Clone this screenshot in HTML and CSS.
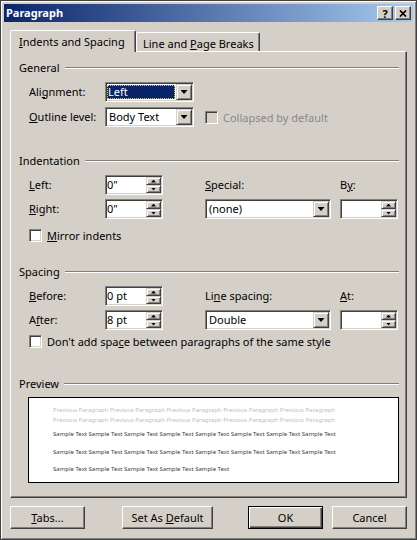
FILE: index.html
```html
<!DOCTYPE html>
<html lang="en">
<head>
    <meta charset="UTF-8">
    <meta name="viewport" content="width=device-width, initial-scale=1.0">
    <title>Paragraph</title>
    <link rel="stylesheet" href="styles.css">
</head>
<body>
    <div class="window">
        <div class="titlebar">
            <span class="title">Paragraph</span>
            <div class="caption-buttons">
                <span class="cap-btn">?</span>
                <span class="cap-btn">
                    <svg width="8" height="7" viewBox="0 0 8 7"><path d="M1 0.5 7 6.5M7 0.5 1 6.5" stroke="#000" stroke-width="1.7"/></svg>
                </span>
            </div>
        </div>

        <div class="client">
            <div class="tabs">
                <div class="tab active"><span><u>I</u>ndents and Spacing</span></div>
                <div class="tab"><span>Line and <u>P</u>age Breaks</span></div>
            </div>

            <div class="panel">
                <!-- General -->
                <div class="group general">
                    <div class="group-title">General</div>
                    <div class="fields">
                        <span class="label">Ali<u>g</u>nment:</span>
                        <div class="combo short">
                            <span class="combo-text selected">Left</span>
                            <span class="combo-btn"><i class="arrow-down"></i></span>
                        </div>
                        <span></span><span></span>

                        <span class="label"><u>O</u>utline level:</span>
                        <div class="combo short">
                            <span class="combo-text">Body Text</span>
                            <span class="combo-btn"><i class="arrow-down"></i></span>
                        </div>
                        <div class="check disabled span-2">
                            <span class="check-box"></span>
                            <span>Collapsed by default</span>
                        </div>
                    </div>
                </div>

                <!-- Indentation -->
                <div class="group indent">
                    <div class="group-title">Indentation</div>
                    <div class="fields">
                        <span class="label"><u>L</u>eft:</span>
                        <div class="spin">
                            <span class="spin-value">0"</span>
                            <span class="spin-btns"><span><i class="arrow-up"></i></span><span><i class="arrow-dn"></i></span></span>
                        </div>
                        <span class="label"><u>S</u>pecial:</span>
                        <span class="label">B<u>y</u>:</span>

                        <span class="label"><u>R</u>ight:</span>
                        <div class="spin">
                            <span class="spin-value">0"</span>
                            <span class="spin-btns"><span><i class="arrow-up"></i></span><span><i class="arrow-dn"></i></span></span>
                        </div>
                        <div class="combo wide">
                            <span class="combo-text">(none)</span>
                            <span class="combo-btn"><i class="arrow-down"></i></span>
                        </div>
                        <div class="spin">
                            <span class="spin-value"></span>
                            <span class="spin-btns"><span><i class="arrow-up"></i></span><span><i class="arrow-dn"></i></span></span>
                        </div>
                    </div>
                    <div class="check check-row mirror">
                        <span class="check-box"></span>
                        <span><u>M</u>irror indents</span>
                    </div>
                </div>

                <!-- Spacing -->
                <div class="group spacing">
                    <div class="group-title">Spacing</div>
                    <div class="fields">
                        <span class="label"><u>B</u>efore:</span>
                        <div class="spin">
                            <span class="spin-value">0 pt</span>
                            <span class="spin-btns"><span><i class="arrow-up"></i></span><span><i class="arrow-dn"></i></span></span>
                        </div>
                        <span class="label">Li<u>n</u>e spacing:</span>
                        <span class="label"><u>A</u>t:</span>

                        <span class="label">A<u>f</u>ter:</span>
                        <div class="spin">
                            <span class="spin-value">8 pt</span>
                            <span class="spin-btns"><span><i class="arrow-up"></i></span><span><i class="arrow-dn"></i></span></span>
                        </div>
                        <div class="combo wide">
                            <span class="combo-text">Double</span>
                            <span class="combo-btn"><i class="arrow-down"></i></span>
                        </div>
                        <div class="spin">
                            <span class="spin-value"></span>
                            <span class="spin-btns"><span><i class="arrow-up"></i></span><span><i class="arrow-dn"></i></span></span>
                        </div>
                    </div>
                    <div class="check check-row same-style">
                        <span class="check-box"></span>
                        <span>Don't add spa<u>c</u>e between paragraphs of the same style</span>
                    </div>
                </div>

                <!-- Preview -->
                <div class="group preview">
                    <div class="group-title">Preview</div>
                    <div class="preview-box">
                        <div class="prev">Previous Paragraph Previous Paragraph Previous Paragraph Previous Paragraph Previous Paragraph</div>
                        <div class="prev">Previous Paragraph Previous Paragraph Previous Paragraph Previous Paragraph Previous Paragraph</div>
                        <div class="sample">
                            <div>Sample Text Sample Text Sample Text Sample Text Sample Text Sample Text Sample Text Sample Text</div>
                            <div>Sample Text Sample Text Sample Text Sample Text Sample Text Sample Text Sample Text Sample Text</div>
                            <div>Sample Text Sample Text Sample Text Sample Text Sample Text</div>
                        </div>
                    </div>
                </div>
            </div>

            <div class="buttons">
                <span class="btn"><span><u>T</u>abs...</span></span>
                <span class="btn set-default"><span>Set As <u>D</u>efault</span></span>
                <span class="btn ok">OK</span>
                <span class="btn cancel">Cancel</span>
            </div>
        </div>
    </div>
</body>
</html>
```

FILE: styles.css
```css
* {
    box-sizing: border-box;
}

body {
    margin: 0;
    background: #d4d0c8;
    font-family: "Noto Sans", "Liberation Sans", sans-serif;
    font-size: 11px;
    color: #000;
}

u {
    text-decoration: underline;
    text-underline-offset: 1px;
}

/* window frame */
.window {
    width: 417px;
    height: 540px;
    padding: 3px;
    display: flex;
    flex-direction: column;
    background: #d4d0c8;
    border: 1px solid #404040;
    box-shadow: inset 1px 1px #fff, inset -1px -1px #808080;
}

.titlebar {
    height: 18px;
    padding: 0 2px;
    display: flex;
    align-items: center;
    justify-content: space-between;
    background: linear-gradient(to right, #0a246a, #a6caf0);
}

.title {
    color: #fff;
    font-weight: bold;
    line-height: 18px;
}

.caption-buttons {
    display: flex;
    gap: 2px;
}

.cap-btn {
    width: 16px;
    height: 14px;
    display: flex;
    align-items: center;
    justify-content: center;
    background: #d4d0c8;
    border: 1px solid;
    border-color: #fff #404040 #404040 #fff;
    box-shadow: inset -1px -1px #808080;
    font-weight: bold;
    font-size: 11px;
    line-height: 1;
}

.client {
    flex: 1;
    display: flex;
    flex-direction: column;
    padding: 8px 6px 7px;
}

/* tabs */
.tabs {
    height: 21px;
    display: flex;
    align-items: flex-end;
    position: relative;
    z-index: 1;
}

.tab {
    width: 124px;
    height: 19px;
    padding: 2px 0 0 6px;
    display: flex;
    align-items: center;
    border: 1px solid;
    border-bottom: none;
    border-color: #fff #404040 transparent #fff;
    box-shadow: inset -1px 0 #808080;
    border-radius: 2px 2px 0 0;
}

.tab.active {
    width: 126px;
    height: 22px;
    padding: 0 0 0 8px;
    margin-bottom: -1px;
    background: #d4d0c8;
}

.panel {
    padding: 9px 7px 14px 8px;
    border: 1px solid;
    border-color: #fff #404040 #404040 #fff;
    box-shadow: inset -1px -1px #808080;
}

/* group boxes */
.group-title {
    height: 14px;
    line-height: 14px;
    display: flex;
    align-items: center;
}

.group-title::after {
    content: "";
    flex: 1;
    margin-left: 5px;
    border-top: 1px solid #808080;
    border-bottom: 1px solid #fff;
}

.indent {
    margin-top: 27px;
}

.spacing {
    margin-top: 23px;
}

.preview {
    margin-top: 29px;
}

.fields {
    display: grid;
    grid-template-columns: 76px 100px 135px 1fr;
    grid-auto-rows: 20px;
    align-items: center;
    margin-top: 7px;
    padding-left: 10px;
    row-gap: 4px;
}

.general .fields {
    row-gap: 5px;
}

.label {
    line-height: 15px;
    padding-bottom: 2px;
}

.span-2 {
    grid-column: span 2;
}

/* sunken edit fields */
.combo,
.spin {
    height: 20px;
    display: flex;
    padding: 1px;
    background: #fff;
    border: 1px solid;
    border-color: #808080 #fff #fff #808080;
    box-shadow: inset 1px 1px #404040, inset -1px -1px #d4d0c8;
}

.combo.short {
    width: 89px;
}

.combo.wide {
    width: 126px;
}

.combo-text {
    flex: 1;
    padding-left: 2px;
    line-height: 15px;
    white-space: nowrap;
}

.combo-text.selected {
    margin: 1px 1px 1px 0;
    padding-left: 1px;
    line-height: 13px;
    color: #fff;
    background: #0a246a;
    outline: 1px dotted #d8d080;
    outline-offset: -1px;
}

.combo-btn,
.spin-btns > span {
    display: flex;
    align-items: center;
    justify-content: center;
    background: #d4d0c8;
    border: 1px solid;
    border-color: #d4d0c8 #404040 #404040 #d4d0c8;
    box-shadow: inset 1px 1px #fff, inset -1px -1px #808080;
}

.combo-btn {
    width: 16px;
}

.arrow-down {
    width: 7px;
    height: 4px;
    background: #000;
    clip-path: polygon(0 0, 100% 0, 50% 100%);
}

.spin {
    width: 58px;
}

.spin-value {
    flex: 1;
    line-height: 15px;
}

.spin-btns {
    width: 15px;
    display: flex;
    flex-direction: column;
}

.spin-btns > span {
    flex: 1;
}

.arrow-up,
.arrow-dn {
    width: 5px;
    height: 3px;
    background: #000;
}

.arrow-up {
    clip-path: polygon(50% 0, 100% 100%, 0 100%);
}

.arrow-dn {
    clip-path: polygon(0 0, 100% 0, 50% 100%);
}

/* checkboxes */
.check {
    display: flex;
    align-items: center;
    gap: 5px;
    white-space: nowrap;
}

.check-box {
    width: 13px;
    height: 13px;
    flex: none;
    background: #fff;
    border: 1px solid;
    border-color: #808080 #fff #fff #808080;
    box-shadow: inset 1px 1px #404040, inset -1px -1px #d4d0c8;
}

.check.disabled {
    color: #888;
}

.check.disabled .check-box {
    background: #d4d0c8;
}

.check-row {
    height: 13px;
    padding-left: 10px;
}

.mirror {
    margin-top: 10px;
}

.same-style {
    margin-top: 5px;
}

/* preview */
.preview-box {
    height: 86px;
    margin: 6px 0 0 9px;
    padding: 7px 0 0 24px;
    background: #fff;
    border: 1px solid #000;
    font-size: 6px;
    white-space: nowrap;
}

.prev {
    line-height: 10px;
    color: #c0c0c0;
}

.sample {
    margin-top: 1px;
    line-height: 17.5px;
    color: #3c3c3c;
}

/* dialog buttons */
.buttons {
    display: flex;
    margin-top: 8px;
}

.btn {
    width: 75px;
    height: 23px;
    display: flex;
    align-items: center;
    justify-content: center;
    border: 1px solid;
    border-color: #fff #404040 #404040 #fff;
    box-shadow: inset -1px -1px #808080;
}

.btn.set-default {
    width: 91px;
    margin-left: 37px;
}

.btn.ok {
    margin-left: 35px;
    border-color: #000;
    box-shadow: inset 1px 1px #fff, inset -1px -1px #404040, inset -2px -2px #808080;
}

.btn.cancel {
    margin-left: 9px;
}
```
